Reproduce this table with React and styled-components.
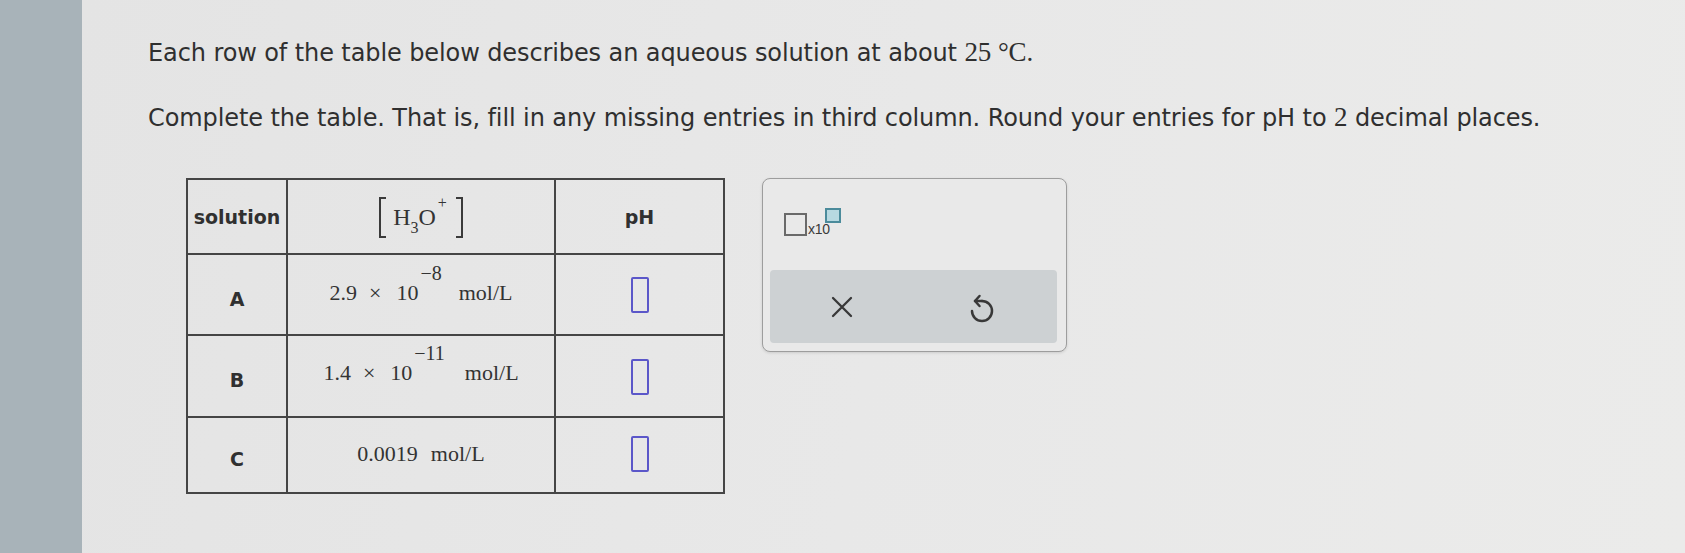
import React from "react";
import styled, { createGlobalStyle } from "styled-components";

const Global = createGlobalStyle`
  html, body { margin: 0; padding: 0; }
  body { width: 1685px; height: 553px; overflow: hidden; background: #e7e7e7; }
`;

const Page = styled.div`
  display: flex;
  width: 1685px;
  height: 553px;
`;

const Strip = styled.div`
  width: 82px;
  flex: none;
  background: #a8b3b9;
`;

const Main = styled.main`
  flex: 1;
  padding: 39px 0 0 66px;
  background: linear-gradient(100deg, #e4e4e4 0%, #e8e8e8 50%, #ebebea 100%);
  color: #2f2f2f;
  font-family: "DejaVu Sans", Verdana, sans-serif;
`;

const Para = styled.p`
  margin: 0 0 ${(p) => p.$gap}px;
  font-size: 24px;
  line-height: 26px;
  letter-spacing: -0.1px;
`;

const Serif = styled.span`
  font-family: "Liberation Serif", "Times New Roman", serif;
  font-size: 27px;
`;

const Row = styled.div`
  display: flex;
  align-items: flex-start;
  gap: 37px;
  padding-left: 38px;
`;

const Table = styled.table`
  border-collapse: collapse;
  table-layout: fixed;
  width: 537px;
  color: #303030;
`;

const Tr = styled.tr`
  height: ${(p) => p.$h}px;
`;

const Cell = styled.td`
  border: 2px solid #454545;
  padding: 0;
  text-align: center;
  vertical-align: middle;
  white-space: nowrap;
`;

const Label = styled(Cell)`
  font-family: "DejaVu Sans", Verdana, sans-serif;
  font-weight: bold;
  font-size: 19px;
  padding-top: ${(p) => p.$pt || 0}px;
`;

const Formula = styled.span`
  display: inline-flex;
  align-items: center;
  font-family: "Liberation Serif", "Times New Roman", serif;
  font-size: 24px;
  color: #333;
  margin-top: 6px;
`;

const Bracket = styled.span`
  display: inline-block;
  width: 7px;
  height: 41px;
  border: 2px solid #3a3a3a;
  border-${(p) => (p.$side === "left" ? "right" : "left")}: none;
  box-sizing: border-box;
`;

const Chem = styled.span`
  display: inline-flex;
  align-items: baseline;
  padding: 0 9px 0 7px;
`;

const Sub = styled.span`
  font-size: 16px;
  position: relative;
  top: 8px;
`;

const Sup = styled.span`
  font-size: 16px;
  position: relative;
  top: -17px;
  margin-left: 2px;
`;

const Conc = styled.span`
  display: inline-flex;
  align-items: baseline;
  font-family: "Liberation Serif", "Times New Roman", serif;
  font-size: 22px;
  color: #333;
  position: relative;
  top: ${(p) => p.$dy}px;
`;

const Times = styled.span`
  margin: 0 15px 0 12px;
`;

const Exp = styled.span`
  font-size: 20px;
  position: relative;
  top: -20px;
  margin-left: 2px;
`;

const Units = styled.span`
  margin-left: ${(p) => p.$gap}px;
`;

const Blank = styled.span`
  display: inline-block;
  width: 18px;
  height: 36px;
  box-sizing: border-box;
  border: 2px solid #5b57c9;
  border-radius: 2px;
  vertical-align: middle;
  margin-top: ${(p) => p.$mt}px;
`;

const Panel = styled.div`
  width: 305px;
  height: 174px;
  box-sizing: border-box;
  border: 1.5px solid #9d9d9d;
  border-radius: 8px;
  background: #e9e9e9;
  box-shadow: 0 1px 3px rgba(0, 0, 0, 0.12);
  padding: 7px 9px 8px 7px;
  display: flex;
  flex-direction: column;
`;

const Top = styled.div`
  flex: 1;
  padding: 19px 0 0 14px;
`;

const Sci = styled.div`
  display: inline-flex;
  align-items: flex-start;
  height: 31px;
`;

const BigBox = styled.span`
  align-self: flex-end;
  width: 23px;
  height: 23px;
  box-sizing: border-box;
  border: 2px solid #6a6a6a;
`;

const Ten = styled.span`
  align-self: flex-end;
  font-family: "Liberation Sans", Arial, sans-serif;
  font-size: 14px;
  line-height: 13px;
  color: #3a3a3a;
  margin: 0 0 0 1px;
  letter-spacing: -0.3px;
`;

const SmallBox = styled.span`
  width: 16px;
  height: 15px;
  box-sizing: border-box;
  border: 2px solid #4b8b9b;
  background: #b7d9e1;
  margin: 3px 0 0 -5px;
`;

const Bar = styled.div`
  height: 73px;
  border-radius: 4px;
  background: #cdd1d3;
  display: grid;
  grid-template-columns: 1fr 1fr;
  align-items: center;
  justify-items: center;
`;

const IconBtn = styled.button`
  border: none;
  background: none;
  padding: 0;
  display: flex;
  align-items: center;
  justify-content: center;
  color: #383838;
  margin: ${(p) => p.$mt || 0}px 0 0 ${(p) => p.$ml || 0}px;
`;

const rows = [
  { id: "A", h: 81, m: "2.9", e: "−8", g: 17, dy: -2, bt: 1 },
  { id: "B", h: 82, m: "1.4", e: "−11", g: 20, dy: -3, bt: 1 },
  { id: "C", h: 76, plain: "0.0019", dy: -1, bt: -3 },
];

export default function App() {
  return (
    <>
      <Global />
      <Page>
        <Strip />
        <Main>
          <Para $gap={38}>
            Each row of the table below describes an aqueous solution at about <Serif>25 °C.</Serif>
          </Para>
          <Para $gap={47}>
            Complete the table. That is, fill in any missing entries in third column. Round your entries for pH to{" "}
            <Serif>2</Serif> decimal places.
          </Para>
          <Row>
            <Table>
              <colgroup>
                <col style={{ width: 100 }} />
                <col style={{ width: 268 }} />
                <col style={{ width: 169 }} />
              </colgroup>
              <tbody>
                <Tr $h={75}>
                  <Label>solution</Label>
                  <Cell>
                    <Formula>
                      <Bracket $side="left" />
                      <Chem>
                        H<Sub>3</Sub>O<Sup>+</Sup>
                      </Chem>
                      <Bracket $side="right" />
                    </Formula>
                  </Cell>
                  <Label>pH</Label>
                </Tr>
                {rows.map((r) => (
                  <Tr key={r.id} $h={r.h}>
                    <Label $pt={8}>{r.id}</Label>
                    <Cell>
                      {r.plain ? (
                        <Conc $dy={r.dy}>
                          {r.plain}
                          <Units $gap={13}>mol/L</Units>
                        </Conc>
                      ) : (
                        <Conc $dy={r.dy}>
                          {r.m}
                          <Times>×</Times>10<Exp>{r.e}</Exp>
                          <Units $gap={r.g}>mol/L</Units>
                        </Conc>
                      )}
                    </Cell>
                    <Cell>
                      <Blank $mt={r.bt} />
                    </Cell>
                  </Tr>
                ))}
              </tbody>
            </Table>
            <Panel>
              <Top>
                <Sci>
                  <BigBox />
                  <Ten>x10</Ten>
                  <SmallBox />
                </Sci>
              </Top>
              <Bar>
                <IconBtn aria-label="clear">
                  <svg width="22" height="22" viewBox="0 0 22 22" fill="none" stroke="currentColor" strokeWidth="2.3" strokeLinecap="round">
                    <path d="M2 2L20 20M20 2L2 20" />
                  </svg>
                </IconBtn>
                <IconBtn aria-label="undo" $mt={2} $ml={-6}>
                  <svg width="28" height="30" viewBox="0 0 28 30" fill="none" stroke="currentColor" strokeWidth="2.5" strokeLinecap="round" strokeLinejoin="round">
                    <path d="M14 8A10 10 0 1 1 4 18" />
                    <path d="M11.5 3L7 8L11.5 13" />
                    <path d="M7 8H14" />
                  </svg>
                </IconBtn>
              </Bar>
            </Panel>
          </Row>
        </Main>
      </Page>
    </>
  );
}
